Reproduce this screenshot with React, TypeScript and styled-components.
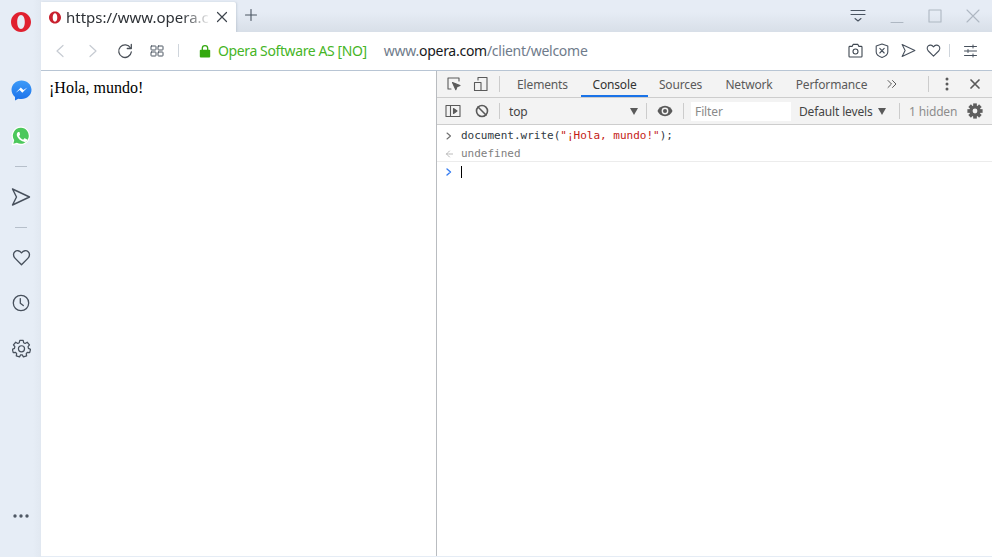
import React from "react";
import styled, { createGlobalStyle } from "styled-components";

const Global = createGlobalStyle`
  html, body { margin: 0; padding: 0; height: 100%; overflow: hidden; background: #fff; }
  #root { height: 100%; }
  * { box-sizing: border-box; }
`;

const UI = `"Noto Sans", "Open Sans", sans-serif`;

const Browser = styled.div`
  display: flex;
  width: 992px;
  height: 557px;
  background: #e5ecf5;
  font-family: ${UI};
`;

const Sidebar = styled.nav`
  width: 41px;
  flex: none;
  display: flex;
  flex-direction: column;
  align-items: center;
  padding-left: 1px;
  background: linear-gradient(to right, #e6edf6 0, #e6edf6 33px, #e1e8f1 41px);
`;

const SideSlot = styled.div<{ $h: number; $mt?: number; $mb?: number }>`
  height: ${(p) => p.$h}px;
  margin-top: ${(p) => p.$mt ?? 0}px;
  margin-bottom: ${(p) => p.$mb ?? 0}px;
  flex: none;
  display: flex;
  align-items: center;
  justify-content: center;
`;

const SideRule = styled.div`
  width: 12px;
  height: 1px;
  background: #b6bfca;
`;

const Spacer = styled.div`
  flex: 1;
`;

const Main = styled.div`
  flex: 1;
  min-width: 0;
  display: flex;
  flex-direction: column;
`;

const TabStrip = styled.div`
  height: 32px;
  flex: none;
  display: flex;
  align-items: flex-end;
  background: linear-gradient(to bottom, #e6ecf5 0, #e6ecf5 12px, #d8dfe8 32px);
`;

const Tab = styled.div`
  width: 195px;
  height: 30px;
  flex: none;
  display: flex;
  align-items: center;
  padding-left: 8px;
  background: #fff;
  border-top-right-radius: 2px;
  box-shadow: 1px 0 2px rgba(120, 135, 155, 0.25);
`;

const TabTitle = styled.div`
  width: 145px;
  margin-left: 5px;
  white-space: nowrap;
  font-size: 15px;
  color: #2d3136;
  -webkit-mask-image: linear-gradient(to right, #000 116px, transparent 145px);
  mask-image: linear-gradient(to right, #000 116px, transparent 145px);
`;

const TabClose = styled.div`
  margin-left: 5px;
  display: flex;
`;

const NewTab = styled.div`
  margin: 0 0 2px 9px;
  width: 14px;
  height: 30px;
  display: flex;
  align-items: center;
`;

const WindowControls = styled.div`
  margin-left: auto;
  display: flex;
  align-items: center;
  height: 32px;
  padding-right: 12px;
  gap: 24px;
`;

const Toolbar = styled.div`
  height: 39px;
  flex: none;
  display: flex;
  align-items: center;
  padding: 0 0 1px 0;
  background: #fff;
  border-bottom: 1px solid #b8c5d4;
`;

const ToolSlot = styled.div<{ $w: number; $ml?: number }>`
  width: ${(p) => p.$w}px;
  margin-left: ${(p) => p.$ml ?? 0}px;
  flex: none;
  display: flex;
  align-items: center;
  justify-content: center;
`;

const VRule = styled.div<{ $h: number; $c?: string; $ml?: number; $mr?: number }>`
  width: 1px;
  height: ${(p) => p.$h}px;
  flex: none;
  background: ${(p) => p.$c ?? "#ccc"};
  margin-left: ${(p) => p.$ml ?? 0}px;
  margin-right: ${(p) => p.$mr ?? 0}px;
`;

const SecureLabel = styled.span`
  margin-left: 7px;
  font-size: 14px;
  letter-spacing: -0.39px;
  color: #46b526;
  white-space: nowrap;
`;

const Url = styled.span`
  margin-left: 17px;
  font-size: 14px;
  letter-spacing: -0.27px;
  color: #6f7b8b;
  white-space: nowrap;
  b { font-weight: 400; color: #17191c; }
`;

const ToolRight = styled.div`
  margin-left: auto;
  display: flex;
  align-items: center;
  padding-right: 15px;
`;

const Content = styled.div`
  flex: 1;
  min-height: 0;
  display: flex;
  background: #fff;
  border-bottom: 1px solid #e5ecf5;
`;

const Page = styled.div`
  width: 396px;
  flex: none;
  padding: 8px;
  font-family: "Liberation Serif", serif;
  font-size: 16px;
  line-height: 18px;
  color: #000;
  border-right: 1px solid #b9bcc0;
`;

const Devtools = styled.div`
  flex: 1;
  min-width: 0;
  display: flex;
  flex-direction: column;
`;

const DtBar = styled.div`
  height: 27px;
  flex: none;
  display: flex;
  align-items: center;
  background: #f3f3f3;
  border-bottom: 1px solid #cdcdcd;
`;

const DtTab = styled.div<{ $active?: boolean; $w: number }>`
  width: ${(p) => p.$w}px;
  height: 26px;
  flex: none;
  display: flex;
  align-items: center;
  justify-content: center;
  font-size: 12px;
  letter-spacing: -0.15px;
  color: ${(p) => (p.$active ? "#333" : "#5a5a5a")};
  border-bottom: 2px solid ${(p) => (p.$active ? "#1a73e8" : "transparent")};
  padding-top: 2px;
`;

const DtLabel = styled.span<{ $c?: string; $ml?: number }>`
  font-size: 12px;
  letter-spacing: -0.15px;
  color: ${(p) => p.$c ?? "#444"};
  margin-left: ${(p) => p.$ml ?? 0}px;
  white-space: nowrap;
`;

const ContextBox = styled.div`
  width: 142px;
  margin-left: 4px;
  padding: 0 8px 0 5px;
  display: flex;
  align-items: center;
  justify-content: space-between;
  flex: none;
`;

const FilterBox = styled.div`
  width: 100px;
  height: 19px;
  flex: none;
  margin-left: 7px;
  padding-left: 4px;
  background: #fff;
  font-size: 12px;
  line-height: 19px;
  letter-spacing: -0.1px;
  color: #8a8a8a;
`;

const LevelsBox = styled.div`
  display: flex;
  align-items: center;
  gap: 5px;
  margin-left: 8px;
  width: 100px;
  flex: none;
`;

const ConsoleRow = styled.div<{ $h: number; $rule?: boolean }>`
  height: ${(p) => p.$h}px;
  flex: none;
  display: flex;
  align-items: center;
  padding: 2px 0 0 8px;
  font-family: "DejaVu Sans Mono", monospace;
  font-size: 11px;
  border-bottom: ${(p) => (p.$rule ? "1px solid #ececec" : "none")};
`;

const Gutter = styled.div`
  width: 16px;
  flex: none;
  display: flex;
`;

const Code = styled.span<{ $c?: string }>`
  color: ${(p) => p.$c ?? "#303942"};
  white-space: pre;
`;

const Str = styled.span`
  color: #c41a16;
`;

const Caret = styled.div`
  width: 1px;
  height: 12px;
  background: #000;
`;

const Stroke: React.FC<{ w: number; h: number; c?: string; sw?: number; children: React.ReactNode }> = ({ w, h, c = "#4a5461", sw = 1.3, children }) => (
  <svg width={w} height={h} viewBox={`0 0 ${w} ${h}`} fill="none" stroke={c} strokeWidth={sw} strokeLinecap="round" strokeLinejoin="round" style={{ display: "block" }}>
    {children}
  </svg>
);

const OperaO: React.FC<{ w: number; h: number; c?: string }> = ({ w, h, c = "#e0202f" }) => (
  <svg width={w} height={h} viewBox="0 0 20 20" style={{ display: "block" }}>
    <path fillRule="evenodd" fill={c} d="M10 0C4.500 0 0 4.500 0 10s4.500 10 10 10 10-4.500 10-10S15.500 0 10 0zm0 3c2.400 0 3.800 3.100 3.800 7s-1.400 7-3.800 7-3.800-3.100-3.800-7 1.400-7 3.800-7z" />
  </svg>
);

const Send: React.FC<{ s?: number; c?: string }> = ({ s = 20, c = "#47505c" }) => (
  <svg width={s} height={s} viewBox="0 0 20 20" fill="none" stroke={c} strokeWidth={1.4} strokeLinejoin="round" style={{ display: "block" }}>
    <path d="M1.500 2 18.500 10 1.500 18 5.500 10z" />
  </svg>
);

const Heart: React.FC<{ s?: number }> = ({ s = 18 }) => (
  <svg width={s} height={s} viewBox="0 0 18 18" fill="none" stroke="#47505c" strokeWidth={1.3} strokeLinejoin="round" style={{ display: "block" }}>
    <path d="M9 15.800 2.800 9.600C1 7.800 1 5 2.700 3.500 4.400 2 7 2.200 9 4.600c2-2.400 4.600-2.600 6.300-1.100C17 5 17 7.800 15.200 9.600z" />
  </svg>
);

const Gear: React.FC<{ s: number; c: string; solid?: boolean }> = ({ s, c, solid }) => {
  const teeth = Array.from({ length: 8 }, (_, i) => i * 45);
  return (
    <svg width={s} height={s} viewBox="0 0 20 20" style={{ display: "block" }}>
      {solid ? (
        <>
          {teeth.map((a) => (
            <rect key={a} x="7.700" y="0.500" width="4.600" height="5" fill={c} transform={`rotate(${a} 10 10)`} />
          ))}
          <circle cx="10" cy="10" r="7" fill={c} />
          <circle cx="10" cy="10" r="3" fill="#f3f3f3" />
        </>
      ) : (
        <g fill="none" stroke={c} strokeWidth="1.300" strokeLinejoin="round">
          <path d="M8.200 1.500h3.600l.5 2.500 1.500.7 2.200-1.300 2.400 2.700-1.500 2 .4 1.800 2.200 1-.9 3.400-2.500-.2-1.100 1.300.4 2.400-3.400 1-1.200-2.100h-1.700l-1.200 2.100-3.400-1 .4-2.400-1.100-1.300-2.500.2-.9-3.400 2.200-1 .4-1.800-1.500-2 2.400-2.700 2.200 1.300 1.500-.7z" />
          <circle cx="10" cy="10.300" r="3.200" />
        </g>
      )}
    </svg>
  );
};

export default function App() {
  return (
    <>
      <Global />
      <Browser>
        <Sidebar>
          <SideSlot $h={43}>
            <OperaO w={20} h={20} />
          </SideSlot>
          <SideSlot $h={30} $mt={32}>
            <svg width="21" height="21" viewBox="0 0 21 21" style={{ display: "block" }}>
              <defs>
                <linearGradient id="ms" x1="0" y1="0" x2="0" y2="1">
                  <stop offset="0" stopColor="#3d9bf8" />
                  <stop offset="1" stopColor="#1c71ea" />
                </linearGradient>
              </defs>
              <path fill="url(#ms)" d="M10.500.5C4.900.5.500 4.600.500 9.800c0 2.900 1.400 5.400 3.500 7.100V20.500l3.300-1.800c1 .3 2.100.4 3.200.4 5.600 0 10-4.100 10-9.300S16.100.500 10.500.5z" />
              <path fill="#fff" d="M4.700 12.800 9.800 7.400l2.600 2.700 4-2.700-5.100 5.400-2.600-2.700z" />
            </svg>
          </SideSlot>
          <SideSlot $h={30} $mt={16}>
            <svg width="20" height="20" viewBox="0 0 20 20" style={{ display: "block" }}>
              <path fill="#fff" d="M10 .5A9.300 9.300 0 0 0 2 14.600L.6 19.500l5-1.300A9.300 9.300 0 1 0 10 .5z" />
              <path fill="#4cc85c" d="M10 1.800a8 8 0 0 0-6.800 12.400l-.9 3.500 3.600-.9A8 8 0 1 0 10 1.800z" />
              <path fill="#fff" d="M7.300 5.600c-.3 0-.7.100-1 .5-.4.400-1 1.100-1 2.500s1.100 2.800 1.200 3c.2.200 2 3.200 5 4.300 2.400.9 2.900.7 3.400.7s1.600-.7 1.900-1.300c.2-.7.200-1.200.1-1.300-.1-.2-.3-.2-.6-.4-.3-.2-1.700-.9-2-1-.3-.1-.5-.1-.7.200l-.9 1.100c-.2.200-.3.200-.6.100-.3-.2-1.300-.5-2.400-1.500-.9-.8-1.500-1.800-1.700-2.100-.2-.3 0-.5.100-.6l.5-.5.300-.5c.1-.2 0-.4 0-.6L8.500 6.100c-.2-.5-.5-.5-.7-.5z" transform="translate(1 1) scale(.9)" />
            </svg>
          </SideSlot>
          <SideSlot $h={1} $mt={15}>
            <SideRule />
          </SideSlot>
          <SideSlot $h={30} $mt={15}>
            <Send s={20} />
          </SideSlot>
          <SideSlot $h={1} $mt={15}>
            <SideRule />
          </SideSlot>
          <SideSlot $h={30} $mt={14}>
            <Heart s={19} />
          </SideSlot>
          <SideSlot $h={30} $mt={16}>
            <Stroke w={18} h={18} c="#47505c">
              <circle cx="9" cy="9" r="7.700" />
              <path d="M8.300 4.600V9.300l3 2.300" />
            </Stroke>
          </SideSlot>
          <SideSlot $h={30} $mt={15}>
            <Gear s={19} c="#47505c" />
          </SideSlot>
          <Spacer />
          <SideSlot $h={14} $mb={34}>
            <svg width="16" height="4" viewBox="0 0 16 4" style={{ display: "block" }}>
              <circle cx="2" cy="2" r="1.700" fill="#4f5864" />
              <circle cx="8" cy="2" r="1.700" fill="#4f5864" />
              <circle cx="14" cy="2" r="1.700" fill="#4f5864" />
            </svg>
          </SideSlot>
        </Sidebar>
        <Main>
          <TabStrip>
            <Tab>
              <OperaO w={12} h={13} c="#c9202e" />
              <TabTitle>https://www.opera.c</TabTitle>
              <TabClose>
                <Stroke w={12} h={12} c="#3d444d" sw={1.2}>
                  <path d="M1.500 1.500l9 9M10.500 1.500l-9 9" />
                </Stroke>
              </TabClose>
            </Tab>
            <NewTab>
              <Stroke w={12} h={12} c="#4a5461" sw={1.1}>
                <path d="M6 .5v11M.5 6h11" />
              </Stroke>
            </NewTab>
            <WindowControls>
              <Stroke w={16} h={14} c="#4a5461" sw={1.1}>
                <path d="M1 1.500h14M1 5.500h14M5 9.500l3 2.500 3-2.500" />
              </Stroke>
              <Stroke w={14} h={14} c="#aeb7c2" sw={1.1}>
                <path d="M1 13.500h12" />
              </Stroke>
              <Stroke w={14} h={14} c="#aeb7c2" sw={1.1}>
                <path d="M1 1h12v12H1z" />
              </Stroke>
              <Stroke w={14} h={14} c="#aeb7c2" sw={1.1}>
                <path d="M1 1l12 12M13 1L1 13" />
              </Stroke>
            </WindowControls>
          </TabStrip>
          <Toolbar>
            <ToolSlot $w={12} $ml={13}>
              <Stroke w={12} h={14} c="#c6cbd2" sw={1.2}>
                <path d="M9 1.500 3 7l6 5.500" />
              </Stroke>
            </ToolSlot>
            <ToolSlot $w={12} $ml={21}>
              <Stroke w={12} h={14} c="#c6cbd2" sw={1.2}>
                <path d="M3 1.500 9 7l-6 5.500" />
              </Stroke>
            </ToolSlot>
            <ToolSlot $w={16} $ml={18}>
              <Stroke w={16} h={16} c="#4a5058" sw={1.3}>
                <path d="M13.500 5A6.300 6.300 0 1 0 14.300 9" />
                <path d="M14.300 1.500V5.500H10.300" />
              </Stroke>
            </ToolSlot>
            <ToolSlot $w={14} $ml={17}>
              <Stroke w={14} h={14} c="#4a5461" sw={1}>
                <rect x="1" y="2" width="5" height="4" rx=".6" />
                <rect x="8" y="2" width="5" height="4" rx=".6" />
                <rect x="1" y="8" width="5" height="4" rx=".6" />
                <rect x="8" y="8" width="5" height="4" rx=".6" />
              </Stroke>
            </ToolSlot>
            <VRule $h={13} $c="#cfd5dc" $ml={14} />
            <ToolSlot $w={12} $ml={20}>
              <svg width="12" height="14" viewBox="0 0 12 14" style={{ display: "block" }}>
                <path d="M3.300 6V4.300a2.700 2.700 0 0 1 5.400 0V6" fill="none" stroke="#33a80f" strokeWidth="1.300" />
                <rect x=".8" y="5.800" width="10.400" height="7.700" rx="1" fill="#33a80f" />
              </svg>
            </ToolSlot>
            <SecureLabel>Opera Software AS [NO]</SecureLabel>
            <Url>
              www.<b>opera.com</b>/client/welcome
            </Url>
            <ToolRight>
              <Stroke w={15} h={15} c="#3f4751" sw={1.1}>
                <path d="M1 4.200q0-.8.8-.8h2.300l1-2h4.800l1 2h2.300q.8 0 .8.800v9q0 .8-.8.800H1.800q-.8 0-.8-.8z" />
                <circle cx="7.500" cy="8.500" r="2.500" />
              </Stroke>
              <ToolSlot $w={14} $ml={12}>
                <Stroke w={14} h={15} c="#47505c" sw={1.1}>
                  <path d="M7 1l5.800 2v6c0 2.500-3 4.500-5.800 5.500C4.200 13.500 1.200 11.500 1.200 9V3z" />
                  <path d="M4.800 5.300l4.400 4.700M9.200 5.300 4.800 10" />
                </Stroke>
              </ToolSlot>
              <ToolSlot $w={15} $ml={12}>
                <Send s={15} />
              </ToolSlot>
              <ToolSlot $w={15} $ml={10}>
                <Heart s={15} />
              </ToolSlot>
              <VRule $h={13} $c="#cfd5dc" $ml={8} />
              <ToolSlot $w={13} $ml={14}>
                <Stroke w={13} h={14} c="#47505c" sw={1}>
                  <path d="M.5 2.500h12M.5 7h12M.5 11.500h12M9 1v3M4 5.500v3M9 10v3" />
                </Stroke>
              </ToolSlot>
            </ToolRight>
          </Toolbar>
          <Content>
            <Page>¡Hola, mundo!</Page>
            <Devtools>
              <DtBar>
                <ToolSlot $w={16} $ml={9}>
                  <Stroke w={16} h={16} c="#5a5a5a" sw={1.1}>
                    <path d="M5 13H2V2h11v3" />
                    <path d="M6.500 6.500 14 9.500l-3 1.300-1.200 3z" fill="#5a5a5a" />
                  </Stroke>
                </ToolSlot>
                <ToolSlot $w={16} $ml={11}>
                  <Stroke w={16} h={16} c="#5a5a5a" sw={1.1}>
                    <path d="M5 4V1.500h9v13H5" />
                    <path d="M1.500 6.500H8v8H1.500z" />
                  </Stroke>
                </ToolSlot>
                <VRule $h={16} $ml={10} $mr={4} />
                <DtTab $w={77}>Elements</DtTab>
                <DtTab $w={67} $active>Console</DtTab>
                <DtTab $w={65}>Sources</DtTab>
                <DtTab $w={72}>Network</DtTab>
                <DtTab $w={93}>Performance</DtTab>
                <ToolSlot $w={12} $ml={8}>
                  <Stroke w={12} h={10} c="#5a5a5a" sw={1}>
                    <path d="M2 1.500 5.500 5 2 8.500M6.500 1.500 10 5 6.500 8.500" />
                  </Stroke>
                </ToolSlot>
                <VRule $h={16} $ml={30} />
                <ToolSlot $w={4} $ml={16}>
                  <svg width="4" height="14" viewBox="0 0 4 14" style={{ display: "block" }}>
                    <circle cx="2" cy="2" r="1.500" fill="#5a5a5a" />
                    <circle cx="2" cy="7" r="1.500" fill="#5a5a5a" />
                    <circle cx="2" cy="12" r="1.500" fill="#5a5a5a" />
                  </svg>
                </ToolSlot>
                <ToolSlot $w={12} $ml={20}>
                  <Stroke w={12} h={12} c="#5a5a5a" sw={1.7}>
                    <path d="M2 2l8 8M10 2l-8 8" />
                  </Stroke>
                </ToolSlot>
              </DtBar>
              <DtBar>
                <ToolSlot $w={16} $ml={8}>
                  <Stroke w={16} h={14} c="#5a5a5a" sw={1.1}>
                    <path d="M1 1.500h14v11H1zM5.500 1.500v11" />
                    <path d="M8.500 4.500 12 7l-3.500 2.500z" fill="#5a5a5a" />
                  </Stroke>
                </ToolSlot>
                <ToolSlot $w={14} $ml={14}>
                  <Stroke w={14} h={14} c="#5a5a5a" sw={1.6}>
                    <circle cx="7" cy="7" r="5.500" />
                    <path d="M3 3l8 8" />
                  </Stroke>
                </ToolSlot>
                <VRule $h={16} $ml={10} />
                <ContextBox>
                  <DtLabel>top</DtLabel>
                  <svg width="8" height="7" viewBox="0 0 8 7" style={{ display: "block" }}>
                    <path d="M0 0h8L4 7z" fill="#5a5a5a" />
                  </svg>
                </ContextBox>
                <VRule $h={16} />
                <ToolSlot $w={16} $ml={10}>
                  <svg width="16" height="12" viewBox="0 0 16 12" style={{ display: "block" }}>
                    <path d="M8 .8C4.500.8 1.700 3 .5 6c1.200 3 4 5.200 7.500 5.200S14.300 9 15.500 6C14.300 3 11.500.8 8 .8z" fill="#5a5a5a" />
                    <circle cx="8" cy="6" r="3.400" fill="#f3f3f3" />
                    <circle cx="8" cy="6" r="2" fill="#5a5a5a" />
                  </svg>
                </ToolSlot>
                <VRule $h={16} $ml={10} />
                <FilterBox>Filter</FilterBox>
                <LevelsBox>
                  <DtLabel>Default levels</DtLabel>
                  <svg width="8" height="7" viewBox="0 0 8 7" style={{ display: "block" }}>
                    <path d="M0 0h8L4 7z" fill="#5a5a5a" />
                  </svg>
                </LevelsBox>
                <VRule $h={16} />
                <DtLabel $c="#8d8d8d" $ml={9}>1 hidden</DtLabel>
                <ToolSlot $w={16} $ml={10}>
                  <Gear s={16} c="#5f5f5f" solid />
                </ToolSlot>
              </DtBar>
              <ConsoleRow $h={19}>
                <Gutter>
                  <Stroke w={8} h={10} c="#6f6f6f" sw={1.1}>
                    <path d="M2 2l3.500 3L2 8" />
                  </Stroke>
                </Gutter>
                <Code>
                  document.write(<Str>"¡Hola, mundo!"</Str>);
                </Code>
              </ConsoleRow>
              <ConsoleRow $h={18} $rule>
                <Gutter>
                  <Stroke w={8} h={10} c="#b5b5b5" sw={1}>
                    <path d="M4.500 2 1.500 5l3 3M1.500 5h6" strokeDasharray="1.500 1" />
                  </Stroke>
                </Gutter>
                <Code $c="#808080">undefined</Code>
              </ConsoleRow>
              <ConsoleRow $h={18}>
                <Gutter>
                  <Stroke w={8} h={10} c="#367cf1" sw={1.4}>
                    <path d="M2 2l3.500 3L2 8" />
                  </Stroke>
                </Gutter>
                <Caret />
              </ConsoleRow>
            </Devtools>
          </Content>
        </Main>
      </Browser>
    </>
  );
}
